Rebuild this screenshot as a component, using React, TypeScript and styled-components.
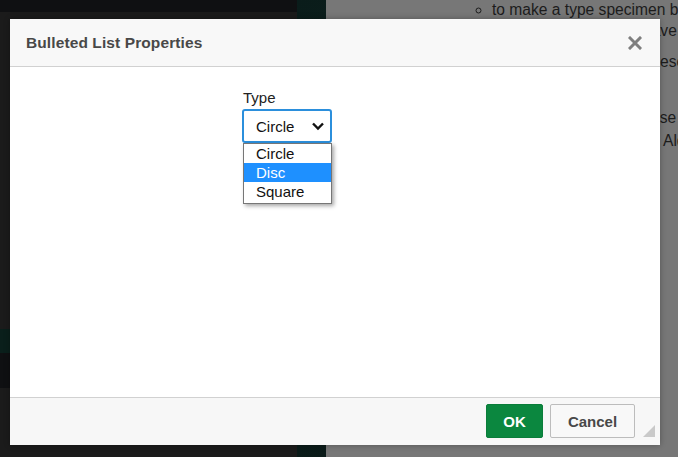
import React from "react";
import styled, { createGlobalStyle } from "styled-components";

const GlobalStyle = createGlobalStyle`
  html, body { margin: 0; padding: 0; }
  body {
    width: 678px;
    height: 457px;
    overflow: hidden;
    font-family: "Liberation Sans", Arial, sans-serif;
  }
`;

const Page = styled.div`
  position: relative;
  display: flex;
  width: 678px;
  height: 457px;
  overflow: hidden;
`;

const LeftPane = styled.div`
  width: 297px;
  display: flex;
  flex-direction: column;
  background: #1b1b1b;
`;

const Band = styled.div<{ $h: number; $bg: string }>`
  height: ${(p) => p.$h}px;
  background: ${(p) => p.$bg};
  flex-shrink: 0;
`;

const TealStrip = styled.div`
  width: 29px;
  background: linear-gradient(135deg, #0a1c1a 0%, #0c211e 50%, #0a1a18 100%);
`;

const RightPane = styled.div`
  flex: 1;
  background: #777777;
  color: #1c1c1c;
  font-size: 15.6px;
  overflow: hidden;
  display: flex;
  flex-direction: column;
`;

const BulletList = styled.ul`
  margin: 0;
  padding-left: 166px;
  list-style-type: circle;
  line-height: 20px;
  white-space: nowrap;
`;

const TextLine = styled.div<{ $indent: number; $mt: number }>`
  margin-top: ${(p) => p.$mt}px;
  padding-left: ${(p) => p.$indent}px;
  line-height: 20px;
  white-space: nowrap;
`;

const Dialog = styled.div`
  position: absolute;
  left: 10px;
  top: 19px;
  width: 650px;
  height: 426px;
  display: flex;
  flex-direction: column;
  background: #fff;
  box-shadow: 0 0 6px rgba(0, 0, 0, 0.3);
`;

const Header = styled.div`
  height: 47px;
  flex-shrink: 0;
  display: flex;
  align-items: center;
  justify-content: space-between;
  padding: 0 18px 0 16px;
  background: #f8f8f8;
  border-bottom: 1px solid #d1d1d1;
`;

const Title = styled.h1`
  margin: 0;
  font-size: 15.5px;
  font-weight: bold;
  letter-spacing: 0.1px;
  color: #484848;
`;

const CloseButton = styled.button`
  border: 0;
  background: none;
  padding: 0;
  width: 14px;
  height: 14px;
  display: flex;
  cursor: pointer;
`;

const Body = styled.div`
  height: 330px;
  flex-shrink: 0;
  padding: 22px 0 0 232px;
  box-sizing: border-box;
`;

const Field = styled.div`
  position: relative;
  display: inline-flex;
  flex-direction: column;
  gap: 3px;
`;

const Label = styled.label`
  font-size: 15px;
  line-height: 17px;
  color: #222;
  padding-left: 1px;
`;

const SelectBox = styled.div`
  width: 90px;
  height: 34px;
  box-sizing: border-box;
  border: 2px solid #2b8fdc;
  border-radius: 3px;
  background: #fff;
  display: flex;
  align-items: center;
  justify-content: space-between;
  padding: 0 5px 0 12px;
  font-size: 15px;
  color: #111;
`;

const ListBox = styled.ul`
  position: absolute;
  left: 1px;
  top: 54px;
  width: 89px;
  box-sizing: border-box;
  margin: 0;
  padding: 0 0 2px;
  list-style: none;
  background: #fff;
  border: 1px solid #767676;
  box-shadow: 2px 2px 4px rgba(0, 0, 0, 0.35);
`;

const Option = styled.li<{ $selected?: boolean }>`
  height: 19px;
  line-height: 19px;
  padding-left: 12px;
  font-size: 15px;
  color: ${(p) => (p.$selected ? "#fff" : "#111")};
  background: ${(p) => (p.$selected ? "#1e90ff" : "transparent")};
`;

const Footer = styled.div`
  flex: 1;
  position: relative;
  display: flex;
  justify-content: flex-end;
  align-items: flex-start;
  gap: 7px;
  padding: 6px 25px 0 0;
  background: #f7f7f7;
  border-top: 1px solid #d1d1d1;
`;

const Button = styled.button<{ $primary?: boolean }>`
  height: 34px;
  box-sizing: border-box;
  padding: 0;
  width: ${(p) => (p.$primary ? "57px" : "85px")};
  border-radius: 2px;
  border: 1px solid ${(p) => (p.$primary ? "#0a7d3a" : "#bcbcbc")};
  background: ${(p) => (p.$primary ? "#0b873f" : "#f8f8f8")};
  color: ${(p) => (p.$primary ? "#fff" : "#484848")};
  font-family: "Liberation Sans", Arial, sans-serif;
  font-size: 15px;
  font-weight: bold;
  cursor: pointer;
`;

const Grip = styled.div`
  position: absolute;
  right: 5px;
  bottom: 8px;
  width: 0;
  height: 0;
  border-left: 12px solid transparent;
  border-bottom: 12px solid #c9c9c9;
`;

export default function App() {
  return (
    <>
      <GlobalStyle />
      <Page>
        <LeftPane>
          <Band $h={12} $bg="#0f1012" />
          <Band $h={317} $bg="#1b1b1b" />
          <Band $h={24} $bg="#0a1f1b" />
          <Band $h={35} $bg="#0f1012" />
        </LeftPane>
        <TealStrip />
        <RightPane>
          <BulletList>
            <li>to make a type specimen book.</li>
          </BulletList>
          <TextLine $indent={317} $mt={1}>have</TextLine>
          <TextLine $indent={321} $mt={11}>these</TextLine>
          <TextLine $indent={299} $mt={36}>release</TextLine>
          <TextLine $indent={337} $mt={3}>Aldus</TextLine>
        </RightPane>

        <Dialog role="dialog">
          <Header>
            <Title>Bulleted List Properties</Title>
            <CloseButton aria-label="Close">
              <svg width="14" height="14" viewBox="0 0 14 14">
                <path d="M2 2 L12 12 M12 2 L2 12" stroke="#7f7f7f" strokeWidth="3" strokeLinecap="square" />
              </svg>
            </CloseButton>
          </Header>
          <Body>
            <Field>
              <Label>Type</Label>
              <SelectBox>
                <span>Circle</span>
                <svg width="14" height="10" viewBox="0 0 14 10">
                  <path d="M2 2.5 L7 7.5 L12 2.5" fill="none" stroke="#111" strokeWidth="2.4" />
                </svg>
              </SelectBox>
              <ListBox>
                <Option>Circle</Option>
                <Option $selected>Disc</Option>
                <Option>Square</Option>
              </ListBox>
            </Field>
          </Body>
          <Footer>
            <Button $primary>OK</Button>
            <Button>Cancel</Button>
            <Grip />
          </Footer>
        </Dialog>
      </Page>
    </>
  );
}
